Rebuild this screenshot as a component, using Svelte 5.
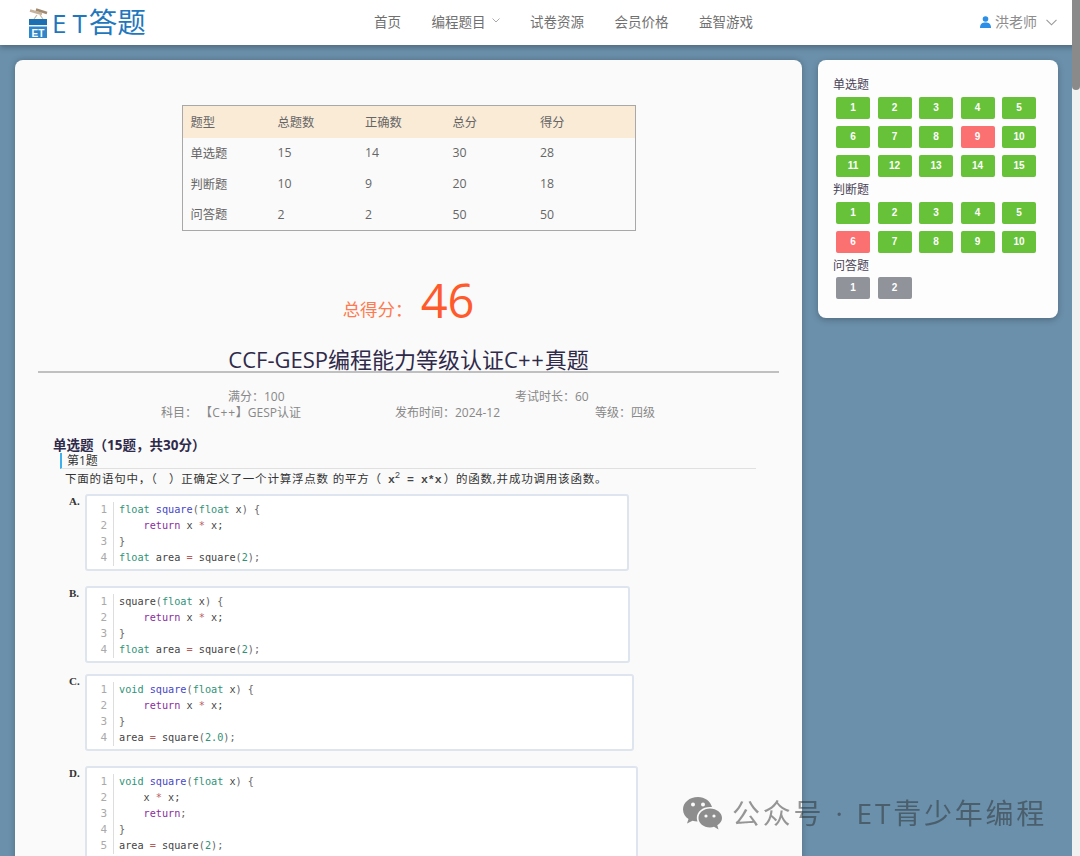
<script>
	const nav = [
		{ label: '首页' },
		{ label: '编程题目', arrow: true },
		{ label: '试卷资源' },
		{ label: '会员价格' },
		{ label: '益智游戏' }
	];

	const rows = [
		['单选题', 15, 14, 30, 28],
		['判断题', 10, 9, 20, 18],
		['问答题', 2, 2, 50, 50]
	];

	const groups = [
		{ name: '单选题', count: 15, wrong: [9] },
		{ name: '判断题', count: 10, wrong: [6] },
		{ name: '问答题', count: 2, wrong: [], pending: true }
	];

	// token kinds: t type, f function, k keyword, o operator, n number, plain otherwise
	const options = [
		{
			key: 'A',
			width: 544,
			gap: 15,
			lines: [
				[['t', 'float'], ['', ' '], ['f', 'square'], ['p', '('], ['t', 'float'], ['', ' x'], ['p', ') {']],
				[['', '    '], ['k', 'return'], ['', ' x '], ['o', '*'], ['', ' x;']],
				[['p', '}']],
				[['t', 'float'], ['', ' area '], ['o', '='], ['', ' square'], ['p', '('], ['n', '2'], ['p', ');']]
			]
		},
		{
			key: 'B',
			width: 545,
			gap: 11,
			lines: [
				[['', 'square'], ['p', '('], ['t', 'float'], ['', ' x'], ['p', ') {']],
				[['', '    '], ['k', 'return'], ['', ' x '], ['o', '*'], ['', ' x;']],
				[['p', '}']],
				[['t', 'float'], ['', ' area '], ['o', '='], ['', ' square'], ['p', '('], ['n', '2'], ['p', ');']]
			]
		},
		{
			key: 'C',
			width: 549,
			gap: 15,
			lines: [
				[['t', 'void'], ['', ' '], ['f', 'square'], ['p', '('], ['t', 'float'], ['', ' x'], ['p', ') {']],
				[['', '    '], ['k', 'return'], ['', ' x '], ['o', '*'], ['', ' x;']],
				[['p', '}']],
				[['', 'area '], ['o', '='], ['', ' square'], ['p', '('], ['n', '2.0'], ['p', ');']]
			]
		},
		{
			key: 'D',
			width: 553,
			gap: 0,
			lines: [
				[['t', 'void'], ['', ' '], ['f', 'square'], ['p', '('], ['t', 'float'], ['', ' x'], ['p', ') {']],
				[['', '    x '], ['o', '*'], ['', ' x;']],
				[['', '    '], ['k', 'return'], ['p', ';']],
				[['p', '}']],
				[['', 'area '], ['o', '='], ['', ' square'], ['p', '('], ['n', '2'], ['p', ');']]
			]
		}
	];
</script>

<header class="topbar">
	<div class="brand">
		<svg class="logo" width="19" height="30" viewBox="0 0 19 30">
			<path d="M1 2.500 L13 6" stroke="#c4b29c" stroke-width="2.500" />
			<path d="M7 1.500 L18 5" stroke="#a08a72" stroke-width="2.500" />
			<path d="M8 7 L5 11 M11 7 L14 11" stroke="#c9b8a2" stroke-width="1.200" />
			<rect x="0" y="11" width="18" height="19" fill="#2f86c9" />
			<rect x="0" y="11" width="18" height="6" fill="#1c6fb0" />
			<rect x="0" y="17" width="18" height="1.500" fill="#e9f3fb" />
			<text x="9" y="28.800" text-anchor="middle" class="logo-text">ET</text>
		</svg>
		<span class="brand-name"><span class="brand-en">ET</span>答题</span>
	</div>
	<nav class="nav">
		{#each nav as item}
			<span class="nav-item">
				{item.label}
				{#if item.arrow}
					<svg class="chev" width="8" height="5" viewBox="0 0 8 5"><path d="M.5.5 4 4 7.500.5" fill="none" stroke="#aaa" /></svg>
				{/if}
			</span>
		{/each}
	</nav>
	<div class="user">
		<svg width="11" height="12" viewBox="0 0 11 12">
			<circle cx="5.500" cy="3" r="2.800" fill="#2b8fe8" />
			<path d="M0 12 C0 7.500 2.500 6.500 5.500 6.500 S11 7.500 11 12 Z" fill="#2b8fe8" />
		</svg>
		<span>洪老师</span>
		<svg class="user-chev" width="11" height="7" viewBox="0 0 11 7"><path d="M.5.8 5.500 5.800 10.500.8" fill="none" stroke="#999" stroke-width="1.100" /></svg>
	</div>
</header>

<div class="page">
	<main class="paper">
		<table class="summary">
			<thead>
				<tr>
					<th>题型</th>
					<th>总题数</th>
					<th>正确数</th>
					<th>总分</th>
					<th>得分</th>
				</tr>
			</thead>
			<tbody>
				{#each rows as row}
					<tr>
						{#each row as cell}
							<td>{cell}</td>
						{/each}
					</tr>
				{/each}
			</tbody>
		</table>

		<div class="score"><span class="score-label">总得分&#xFF1A;</span><span class="score-value">46</span></div>

		<h1 class="title">CCF-GESP编程能力等级认证C<span class="plus">++</span>真题</h1>

		<div class="meta meta-top">
			<span>满分&#xFF1A;100</span>
			<span>考试时长&#xFF1A;60</span>
		</div>
		<div class="meta meta-bottom">
			<span>科目&#xFF1A; &#x3010;<span class="plus">C++</span>&#x3011;GESP认证</span>
			<span>发布时间&#xFF1A;2024-12</span>
			<span>等级&#xFF1A;四级</span>
		</div>

		<h2 class="section">单选题&#xFF08;15题&#xFF0C;共30分&#xFF09;</h2>
		<div class="question-no">第1题</div>
		<p class="stem">下面的语句中&#xFF0C;&#xFF08;&nbsp; &nbsp;&#xFF09;正确定义了一个计算浮点数 的平方&#xFF08;<span class="formula">x<sup>2</sup> = x*x</span>&#xFF09;的函数,并成功调用该函数&#x3002;</p>

		{#each options as opt}
			<div class="option" style="margin-bottom: {opt.gap}px">
				<span class="option-key">{opt.key}.</span>
				<div class="code" style="width: {opt.width}px">
					<div class="gutter">
						{#each opt.lines as _, i}
							<div>{i + 1}</div>
						{/each}
					</div>
					<pre class="source">{#each opt.lines as line}<div>{#each line as [kind, text]}<span class={kind}>{text}</span>{/each}</div>{/each}</pre>
				</div>
			</div>
		{/each}
	</main>

	<aside class="sheet">
		{#each groups as group}
			<div class="group-name">{group.name}</div>
			<div class="answers">
				{#each Array(group.count) as _, i}
					<span class="answer" class:wrong={group.wrong.includes(i + 1)} class:pending={group.pending}>{i + 1}</span>
				{/each}
			</div>
		{/each}
	</aside>
</div>

<div class="scrollbar"><div class="thumb"></div></div>

<div class="watermark">
	<svg width="41" height="34" viewBox="0 0 41 34">
		<path d="M16 1 C7.500 1 1 6.500 1 13.500 C1 17.500 3.200 20.800 6.500 23 L5 27.500 L10.500 24.800 C12 25.300 14 25.600 15.500 25.600 C15 24.500 14.800 23.300 14.800 22 C14.800 15.800 20.500 11 28 11 L30 11.100 C28.500 5.300 22.800 1 16 1 Z" fill="#8d8d8d" />
		<circle cx="11" cy="8.500" r="2" fill="#fafafa" />
		<circle cx="21" cy="8.500" r="2" fill="#fafafa" />
		<path d="M28 12.500 C21.500 12.500 16.500 16.800 16.500 22 C16.500 27.200 21.500 31.500 28 31.500 C29.500 31.500 30.800 31.200 32 30.800 L36.500 33.500 L35.300 29.300 C38.200 27.500 40 25 40 22 C40 16.800 34.500 12.500 28 12.500 Z" fill="#8d8d8d" />
		<circle cx="24" cy="20" r="1.600" fill="#fafafa" />
		<circle cx="32" cy="20" r="1.600" fill="#fafafa" />
	</svg>
	<span>公众号<span class="dot">·</span>ET青少年编程</span>
</div>

<style>
	:global(body) {
		margin: 0;
		height: 856px;
		overflow: hidden;
		background: #6b90ab;
		font-family: 'Open Sans', 'Noto Sans CJK SC', sans-serif;
		color: #666;
	}

	.topbar {
		position: relative;
		height: 45px;
		background: #fff;
		box-shadow: 0 2px 6px rgba(0, 0, 0, 0.3);
		display: flex;
		align-items: center;
		padding: 0 23px 0 29px;
	}

	.brand {
		display: flex;
		align-items: center;
		gap: 4px;
		width: 345px;
	}

	.logo-text {
		font: bold 10px 'Liberation Sans', sans-serif;
		fill: #fff;
	}

	.brand-name {
		font-size: 28.500px;
		line-height: 45px;
		color: #1f77bd;
		white-space: nowrap;
	}

	.brand-en {
		font-size: 26px;
		letter-spacing: 6px;
		margin-right: -4px;
	}

	.nav {
		display: flex;
		gap: 30.500px;
		flex: 1;
		font-size: 13.500px;
		line-height: 18px;
		margin-bottom: 1px;
		color: #707070;
	}

	.nav-item {
		display: flex;
		align-items: center;
		gap: 6px;
		white-space: nowrap;
	}

	.chev {
		margin-bottom: 3px;
	}

	.user {
		display: flex;
		align-items: center;
		gap: 4px;
		font-size: 14px;
		line-height: 18px;
		margin-bottom: 1px;
		color: #8c8c8c;
	}

	.user-chev {
		margin-left: 5px;
	}

	.page {
		display: flex;
		align-items: flex-start;
		gap: 16px;
		padding: 15px 0 0 15px;
	}

	.paper {
		width: 787px;
		height: 860px;
		box-sizing: border-box;
		padding: 45px 23px 0;
		background: #fafafa;
		border-radius: 8px 8px 0 0;
		box-shadow: 0 0 6px rgba(0, 0, 0, 0.25);
		overflow: hidden;
	}

	.summary {
		width: 454px;
		margin-left: 144px;
		border-collapse: collapse;
		border: 1px solid #a8a8a8;
		table-layout: fixed;
		font-size: 12.300px;
		color: #666;
	}

	.summary th,
	.summary td {
		font-weight: 400;
		text-align: left;
		padding: 0 0 1px 7.500px;
		height: 31px;
		box-sizing: border-box;
	}

	.summary th {
		background: #faebd7;
		height: 32px;
		width: 87.500px;
		padding-bottom: 0;
	}

	.summary th:last-child {
		width: auto;
	}

	.score {
		margin-top: 42px;
		text-align: center;
		color: #ff5a2c;
		line-height: 54px;
		height: 54px;
	}

	.score-label {
		font-size: 17.500px;
		color: #ff7a50;
	}

	.score-value {
		font-size: 47px;
		margin-left: 8px;
		vertical-align: -2px;
	}

	.title {
		margin: 12px 0 0;
		padding: 4px 0 0;
		border-bottom: 2px solid #c0c0c0;
		font-size: 22px;
		line-height: 32px;
		font-weight: 400;
		text-align: center;
		color: #2f2a4a;
		height: 28px;
	}

	.plus {
		letter-spacing: 0.800px;
	}

	.meta {
		font-size: 12px;
		line-height: 16px;
		color: #888;
		display: grid;
		white-space: nowrap;
	}

	.meta-top {
		margin-top: 16px;
		padding-left: 190px;
		grid-template-columns: 287px auto;
	}

	.meta-bottom {
		padding-left: 123px;
		grid-template-columns: 234px 200px auto;
	}

	.section {
		margin: 16px 0 0 15px;
		font-size: 13.500px;
		line-height: 16px;
		font-weight: 700;
		color: #2f2a4a;
	}

	.question-no {
		margin-left: 22px;
		width: 696px;
		box-sizing: border-box;
		padding-left: 5px;
		border-left: 2px solid #3fb0ee;
		border-bottom: 1px solid #e0e0e0;
		font-size: 12px;
		line-height: 15px;
		color: #333;
	}

	.stem {
		margin: 1px 0 6px 27px;
		font-size: 11.500px;
		line-height: 17px;
		letter-spacing: 0.800px;
		color: #333;
		white-space: nowrap;
	}

	.formula {
		font-family: 'Liberation Mono', monospace;
		margin: 0 2px 0 6px;
		font-weight: 700;
		color: #444;
		letter-spacing: 0;
	}

	.formula sup {
		font-size: 9px;
		line-height: 0;
		font-weight: 400;
	}

	.option {
		display: flex;
		gap: 5px;
		padding-left: 31px;
	}

	.option-key {
		font: 700 11px 'Liberation Serif', serif;
		color: #333;
		margin-top: 1px;
		width: 11px;
	}

	.code {
		display: flex;
		box-sizing: border-box;
		padding: 6px 0 3px;
		border: 2px solid #dfe5ee;
		border-radius: 3px;
		background: #fff;
		font-family: 'DejaVu Sans Mono', monospace;
		font-size: 10.200px;
		line-height: 16px;
	}

	.gutter {
		width: 20px;
		padding-right: 6px;
		border-right: 1px solid #ddd;
		text-align: right;
		font-size: 11px;
		color: #aaa;
	}

	.source {
		margin: 0 0 0 5px;
		font: inherit;
		color: #444;
	}

	.t,
	.n {
		color: #2e9277;
	}

	.f {
		color: #4646c6;
	}

	.k {
		color: #8a2d9c;
	}

	.o {
		color: #b95c5c;
	}

	.p {
		color: #666;
	}

	.sheet {
		width: 240px;
		height: 258px;
		box-sizing: border-box;
		padding: 17px 15px 0;
		background: #fdfdfd;
		border-radius: 8px;
		box-shadow: 0 2px 6px rgba(0, 0, 0, 0.25);
	}

	.group-name {
		font-size: 12px;
		line-height: 16px;
		color: #4a4458;
	}

	.answers {
		display: flex;
		flex-wrap: wrap;
		gap: 7px 7.500px;
		padding: 4px 0 5px 3px;
	}

	.answers:last-child {
		margin-top: -1px;
	}

	.answer {
		width: 34px;
		height: 22px;
		background: #67c23a;
		border-radius: 2px;
		color: #fff;
		font: 700 10px/22px 'Liberation Sans', sans-serif;
		text-align: center;
	}

	.answer.wrong {
		background: #fb7070;
	}

	.answer.pending {
		background: #909399;
	}

	.scrollbar {
		position: fixed;
		top: 0;
		right: 0;
		bottom: 0;
		width: 8px;
		background: #f1f1f1;
	}

	.thumb {
		height: 90px;
		background: #8a8a8a;
		border-radius: 0 0 4px 4px;
	}

	.watermark {
		position: fixed;
		left: 682px;
		top: 796px;
		display: flex;
		align-items: center;
		gap: 9px;
		font-size: 28px;
		letter-spacing: 2.800px;
		line-height: 34px;
		color: rgba(40, 40, 40, 0.48);
		white-space: nowrap;
	}

	.dot {
		margin: 0 11px;
	}
</style>
